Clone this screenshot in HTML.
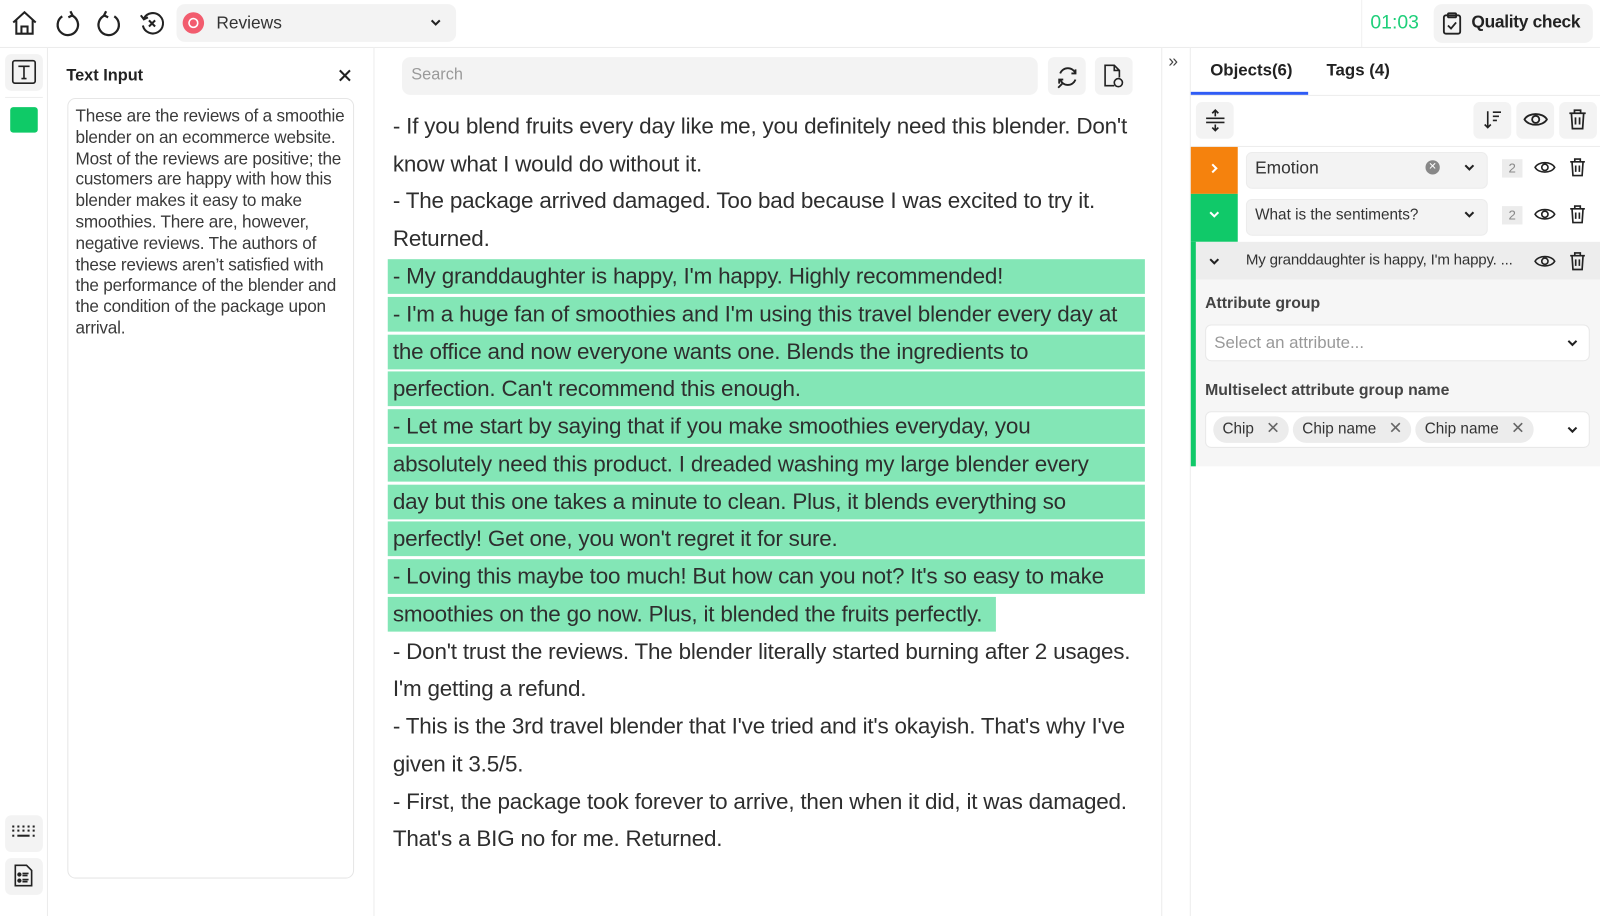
<!DOCTYPE html>
<html><head><meta charset="utf-8"><style>
*{box-sizing:border-box;margin:0;padding:0}
body{width:1600px;height:898px;overflow:hidden;background:#fff;font-family:"Liberation Sans",sans-serif;color:#2b2b2b;position:relative}
#root{position:absolute;left:0;top:0;width:1568px;height:880px;transform:scale(1.0204);transform-origin:0 0}
.abs{position:absolute}
.ib{position:absolute;background:#f3f3f3;border-radius:6px}
.ln{position:absolute;left:380px;height:34px;line-height:34px;padding-left:5px;font-size:22px;white-space:nowrap;color:#2e2e2e;letter-spacing:-0.2px}
.hl{background:#83e6b6;width:742px}
.lt{font-size:16.8px;line-height:20.8px;color:#3a3a3a;letter-spacing:-0.2px}
.sel{position:absolute;background:#f3f3f3;border:1px solid #ececec;border-radius:6px}
.chip{display:inline-block;background:#ececec;border-radius:14px;padding:0 9px;height:26px;line-height:26px;font-size:15px;color:#333;margin-right:4px}
.chip span{margin-left:12px;color:#666;font-size:16px}
</style></head><body><div id="root">
<div class="abs" style="left:0;top:46px;width:1568px;height:1px;background:#ececec"></div>
<svg class="abs" style="left:10px;top:9px" width="28" height="28" viewBox="0 0 28 28" fill="none" stroke="#222" stroke-width="2"><path d="M3 13L14 3l11 10M6 11v13h16V11M11 24v-7h6v7"/></svg>
<svg class="abs" style="left:52px;top:9px" width="28" height="28" viewBox="0 0 28 28" fill="none" stroke="#222" stroke-width="2.2"><path d="M9 7a10 10 0 1 0 9 -1"/><path d="M17 2l2 4-4 2"/></svg>
<svg class="abs" style="left:93px;top:9px" width="28" height="28" viewBox="0 0 28 28" fill="none" stroke="#222" stroke-width="2.2"><path d="M19 7a10 10 0 1 1 -9 -1"/><path d="M11 2l-2 4 4 2"/></svg>
<svg class="abs" style="left:135px;top:9px" width="28" height="28" viewBox="0 0 28 28" fill="none" stroke="#222" stroke-width="2"><path d="M6 9a10 10 0 1 1 -1 7"/><path d="M3 6l3 4 4-2"/><path d="M11 11l6 6M17 11l-6 6"/></svg>
<div class="ib" style="left:173px;top:4px;width:274px;height:37px;border-radius:8px"></div>
<div class="abs" style="left:179px;top:12px;width:21px;height:21px;border-radius:50%;background:#f25c6e"></div>
<svg class="abs" style="left:183px;top:16px" width="13" height="13" viewBox="0 0 13 13" fill="none" stroke="#fff" stroke-width="1.6"><path d="M3 9a4 4 0 0 1 7-5M10 4a4 4 0 0 1-7 5"/></svg>
<div class="abs" style="left:212px;top:13px;font-size:17px;color:#333">Reviews</div>
<svg class="abs" style="left:421px;top:17px" width="12" height="10" viewBox="0 0 12 10" fill="none" stroke="#222" stroke-width="2"><path d="M2 3l4 4 4-4"/></svg>
<div class="abs" style="left:1334px;top:0;width:1px;height:46px;background:#f0f0f0"></div>
<div class="abs" style="left:1343px;top:12px;font-size:19px;color:#1fcf7a">01:03</div>
<div class="ib" style="left:1405px;top:4px;width:156px;height:38px;border-radius:8px"></div>
<svg class="abs" style="left:1412px;top:11px" width="22" height="24" viewBox="0 0 22 24" fill="none" stroke="#222" stroke-width="1.8"><rect x="3" y="4" width="16" height="18" rx="2"/><rect x="7" y="2" width="8" height="4" rx="1"/><path d="M7 14l3 3 5-6"/></svg>
<div class="abs" style="left:1442px;top:12px;font-size:17px;font-weight:bold;color:#222;letter-spacing:-0.3px">Quality check</div>
<div class="abs" style="left:46px;top:47px;width:1px;height:851px;background:#ececec"></div>
<div class="ib" style="left:5px;top:53px;width:37px;height:36px"></div>
<svg class="abs" style="left:11px;top:58px" width="25" height="25" viewBox="0 0 25 25" fill="none" stroke="#222" stroke-width="1.6"><rect x="1.5" y="1.5" width="22" height="22" rx="2"/><path d="M7 7h11M12.5 7v12M10 19h5"/></svg>
<div class="abs" style="left:5px;top:95px;width:37px;height:1px;background:#eee"></div>
<div class="abs" style="left:10px;top:105px;width:27px;height:25px;background:#0fca67;border-radius:3px"></div>
<div class="ib" style="left:5px;top:799px;width:37px;height:36px"></div>
<svg class="abs" style="left:11px;top:808px" width="24" height="14" viewBox="0 0 24 14" fill="#222"><g><rect x="1" y="1" width="2" height="2"/><rect x="6" y="1" width="2" height="2"/><rect x="11" y="1" width="2" height="2"/><rect x="16" y="1" width="2" height="2"/><rect x="21" y="1" width="2" height="2"/><rect x="1" y="5" width="2" height="2"/><rect x="6" y="5" width="2" height="2"/><rect x="11" y="5" width="2" height="2"/><rect x="16" y="5" width="2" height="2"/><rect x="21" y="5" width="2" height="2"/><rect x="1" y="10" width="2" height="2"/><rect x="6" y="10" width="12" height="2"/><rect x="21" y="10" width="2" height="2"/></g></svg>
<div class="ib" style="left:5px;top:841px;width:37px;height:36px"></div>
<svg class="abs" style="left:13px;top:846px" width="20" height="24" viewBox="0 0 20 24" fill="none" stroke="#222" stroke-width="1.6"><path d="M2 2h11l5 5v15H2z"/><circle cx="6" cy="11" r="1.3" fill="#222"/><circle cx="6" cy="17" r="1.3" fill="#222"/><path d="M9 10h6M9 12h5M9 16h6M9 18h5"/></svg>
<div class="abs" style="left:65px;top:66px;font-size:16px;font-weight:bold;color:#222">Text Input</div>
<svg class="abs" style="left:331px;top:67px" width="14" height="14" viewBox="0 0 14 14" stroke="#222" stroke-width="2"><path d="M2 2l10 10M12 2L2 12"/></svg>
<div class="abs" style="left:66px;top:96px;width:281px;height:765px;border:1px solid #e6e6e6;border-radius:8px"></div>
<div class="abs lt" style="left:74px;top:104px;width:280px">These are the reviews of a smoothie<br>blender on an ecommerce website.<br>Most of the reviews are positive; the<br>customers are happy with how this<br>blender makes it easy to make<br>smoothies. There are, however,<br>negative reviews. The authors of<br>these reviews aren’t satisfied with<br>the performance of the blender and<br>the condition of the package upon<br>arrival.</div>
<div class="abs" style="left:366px;top:47px;width:1px;height:851px;background:#ececec"></div>
<div class="ib" style="left:394px;top:56px;width:623px;height:37px;border-radius:8px"></div>
<div class="abs" style="left:403px;top:65px;font-size:16px;color:#9a9a9a">Search</div>
<div class="ib" style="left:1027px;top:56px;width:37px;height:37px"></div>
<svg class="abs" style="left:1033px;top:62px" width="26" height="26" viewBox="0 0 26 26" fill="none" stroke="#222" stroke-width="1.8"><path d="M6 10a8 8 0 0 1 15 0M21 16a8 8 0 0 1-15 0"/><path d="M21 6v4h-4M5 20v-4h4"/><path d="M4 24l4-4"/></svg>
<div class="ib" style="left:1073px;top:56px;width:37px;height:37px"></div>
<svg class="abs" style="left:1080px;top:62px" width="24" height="26" viewBox="0 0 24 26" fill="none" stroke="#222" stroke-width="1.6"><path d="M12 22H3V2h9l5 5v7M12 2v5h5"/><circle cx="16" cy="19" r="4"/></svg>
<div class="ln" style="top:107px">- If you blend fruits every day like me, you definitely need this blender. Don't</div>
<div class="ln" style="top:144px">know what I would do without it.</div>
<div class="ln" style="top:180px">- The package arrived damaged. Too bad because I was excited to try it.</div>
<div class="ln" style="top:217px">Returned.</div>
<div class="ln hl" style="top:254px">- My granddaughter is happy, I'm happy. Highly recommended!</div>
<div class="ln hl" style="top:291px">- I'm a huge fan of smoothies and I'm using this travel blender every day at</div>
<div class="ln hl" style="top:328px">the office and now everyone wants one. Blends the ingredients to</div>
<div class="ln hl" style="top:364px">perfection. Can't recommend this enough.</div>
<div class="ln hl" style="top:401px">- Let me start by saying that if you make smoothies everyday, you</div>
<div class="ln hl" style="top:438px">absolutely need this product. I dreaded washing my large blender every</div>
<div class="ln hl" style="top:475px">day but this one takes a minute to clean. Plus, it blends everything so</div>
<div class="ln hl" style="top:511px">perfectly! Get one, you won't regret it for sure.</div>
<div class="ln hl" style="top:548px">- Loving this maybe too much! But how can you not? It's so easy to make</div>
<div class="ln hl" style="top:585px;width:596px">smoothies on the go now. Plus, it blended the fruits perfectly.</div>
<div class="ln" style="top:622px">- Don't trust the reviews. The blender literally started burning after 2 usages.</div>
<div class="ln" style="top:658px">I'm getting a refund.</div>
<div class="ln" style="top:695px">- This is the 3rd travel blender that I've tried and it's okayish. That's why I've</div>
<div class="ln" style="top:732px">given it 3.5/5.</div>
<div class="ln" style="top:769px">- First, the package took forever to arrive, then when it did, it was damaged.</div>
<div class="ln" style="top:805px">That's a BIG no for me. Returned.</div>
<div class="abs" style="left:1138px;top:47px;width:1px;height:851px;background:#ececec"></div>
<div class="abs" style="left:1145px;top:50px;font-size:17px;color:#444">»</div>
<div class="abs" style="left:1166px;top:47px;width:1px;height:851px;background:#ececec"></div>
<div class="abs" style="left:1186px;top:60px;font-size:16.5px;font-weight:bold;color:#222">Objects(6)</div>
<div class="abs" style="left:1300px;top:60px;font-size:16.5px;font-weight:bold;color:#222">Tags (4)</div>
<div class="abs" style="left:1167px;top:90px;width:115px;height:3px;background:#2f5cf5"></div>
<div class="abs" style="left:1167px;top:93px;width:433px;height:1px;background:#ececec"></div>
<div class="ib" style="left:1172px;top:100px;width:37px;height:36px"></div>
<svg class="abs" style="left:1180px;top:106px" width="22" height="24" viewBox="0 0 22 24" fill="none" stroke="#222" stroke-width="1.6"><path d="M2 10h18M2 14h18M11 2v6M8 5l3-3 3 3M11 22v-6M8 19l3 3 3-3"/></svg>
<div class="ib" style="left:1444px;top:100px;width:37px;height:36px"></div>
<svg class="abs" style="left:1452px;top:106px" width="22" height="22" viewBox="0 0 22 22" fill="none" stroke="#222" stroke-width="1.6"><path d="M6 3v16M3 16l3 3 3-3M11 4h8M11 8h6M11 12h4"/></svg>
<div class="ib" style="left:1486px;top:100px;width:37px;height:36px"></div>
<svg class="abs" style="left:1493px;top:109px" width="24" height="16" viewBox="0 0 24 16" fill="none" stroke="#222" stroke-width="1.8"><path d="M1 8c4-7 18-7 22 0c-4 7-18 7-22 0z"/><circle cx="12" cy="8" r="3.5"/></svg>
<div class="ib" style="left:1528px;top:100px;width:37px;height:36px"></div>
<svg class="abs" style="left:1536px;top:106px" width="20" height="22" viewBox="0 0 20 22" fill="none" stroke="#222" stroke-width="1.7"><path d="M2 5h16M7 5V2h6v3M4 5l1 15h10l1-15M8 9v7M12 9v7"/></svg>
<div class="abs" style="left:1167px;top:143px;width:433px;height:1px;background:#ececec"></div>
<div class="abs" style="left:1167px;top:144px;width:46px;height:46px;background:#f5820d"></div>
<svg class="abs" style="left:1184px;top:159px" width="12" height="12" viewBox="0 0 12 12" fill="none" stroke="#fff" stroke-width="2"><path d="M4 2l4 4-4 4"/></svg>
<div class="sel" style="left:1221px;top:149px;width:237px;height:36px"></div>
<div class="abs" style="left:1230px;top:155px;font-size:17px;color:#333">Emotion</div>
<div class="abs" style="left:1397px;top:157px;width:14px;height:14px;border-radius:50%;background:#888;color:#fff;font-size:10px;line-height:14px;text-align:center">✕</div>
<svg class="abs" style="left:1434px;top:159px" width="12" height="10" viewBox="0 0 12 10" fill="none" stroke="#222" stroke-width="2"><path d="M2 3l4 4 4-4"/></svg>
<div class="abs" style="left:1472px;top:156px;width:20px;height:18px;background:#ececec;font-size:13px;color:#888;text-align:center;line-height:18px">2</div>
<svg class="abs" style="left:1503px;top:157px" width="22" height="14" viewBox="0 0 24 16" fill="none" stroke="#222" stroke-width="1.8"><path d="M1 8c4-7 18-7 22 0c-4 7-18 7-22 0z"/><circle cx="12" cy="8" r="3.5"/></svg>
<svg class="abs" style="left:1537px;top:154px" width="18" height="20" viewBox="0 0 20 22" fill="none" stroke="#222" stroke-width="1.8"><path d="M2 5h16M7 5V2h6v3M4 5l1 15h10l1-15M8 9v7M12 9v7"/></svg>
<div class="abs" style="left:1167px;top:190px;width:46px;height:47px;background:#10c969"></div>
<svg class="abs" style="left:1184px;top:204px" width="12" height="12" viewBox="0 0 12 12" fill="none" stroke="#fff" stroke-width="2"><path d="M2 4l4 4 4-4"/></svg>
<div class="sel" style="left:1221px;top:195px;width:237px;height:36px"></div>
<div class="abs" style="left:1230px;top:202px;font-size:15px;color:#333">What is the sentiments?</div>
<svg class="abs" style="left:1434px;top:205px" width="12" height="10" viewBox="0 0 12 10" fill="none" stroke="#222" stroke-width="2"><path d="M2 3l4 4 4-4"/></svg>
<div class="abs" style="left:1472px;top:202px;width:20px;height:18px;background:#ececec;font-size:13px;color:#888;text-align:center;line-height:18px">2</div>
<svg class="abs" style="left:1503px;top:203px" width="22" height="14" viewBox="0 0 24 16" fill="none" stroke="#222" stroke-width="1.8"><path d="M1 8c4-7 18-7 22 0c-4 7-18 7-22 0z"/><circle cx="12" cy="8" r="3.5"/></svg>
<svg class="abs" style="left:1537px;top:200px" width="18" height="20" viewBox="0 0 20 22" fill="none" stroke="#222" stroke-width="1.8"><path d="M2 5h16M7 5V2h6v3M4 5l1 15h10l1-15M8 9v7M12 9v7"/></svg>
<div class="abs" style="left:1167px;top:237px;width:5px;height:220px;background:#10c969"></div>
<div class="abs" style="left:1172px;top:237px;width:428px;height:37px;background:#ededed"></div>
<svg class="abs" style="left:1184px;top:250px" width="12" height="12" viewBox="0 0 12 12" fill="none" stroke="#222" stroke-width="2"><path d="M2 4l4 4 4-4"/></svg>
<div class="abs" style="left:1221px;top:247px;font-size:14.8px;color:#333;letter-spacing:-0.2px">My granddaughter is happy, I'm happy. ...</div>
<svg class="abs" style="left:1503px;top:249px" width="22" height="14" viewBox="0 0 24 16" fill="none" stroke="#222" stroke-width="1.8"><path d="M1 8c4-7 18-7 22 0c-4 7-18 7-22 0z"/><circle cx="12" cy="8" r="3.5"/></svg>
<svg class="abs" style="left:1537px;top:246px" width="18" height="20" viewBox="0 0 20 22" fill="none" stroke="#222" stroke-width="1.8"><path d="M2 5h16M7 5V2h6v3M4 5l1 15h10l1-15M8 9v7M12 9v7"/></svg>
<div class="abs" style="left:1172px;top:274px;width:428px;height:183px;background:#f6f6f6"></div>
<div class="abs" style="left:1181px;top:289px;font-size:15.5px;font-weight:bold;color:#444">Attribute group</div>
<div class="abs" style="left:1181px;top:318px;width:377px;height:36px;background:#fff;border:1px solid #e8e8e8;border-radius:6px"></div>
<div class="abs" style="left:1190px;top:327px;font-size:16.5px;color:#999">Select an attribute...</div>
<svg class="abs" style="left:1535px;top:331px" width="12" height="10" viewBox="0 0 12 10" fill="none" stroke="#222" stroke-width="2"><path d="M2 3l4 4 4-4"/></svg>
<div class="abs" style="left:1181px;top:374px;font-size:15.5px;font-weight:bold;color:#444">Multiselect attribute group name</div>
<div class="abs" style="left:1181px;top:403px;width:377px;height:36px;background:#fff;border:1px solid #e8e8e8;border-radius:6px;padding:4px 0 0 7px;white-space:nowrap"><div class="chip">Chip<span>✕</span></div><div class="chip">Chip name<span>✕</span></div><div class="chip">Chip name<span>✕</span></div></div>
<svg class="abs" style="left:1535px;top:416px" width="12" height="10" viewBox="0 0 12 10" fill="none" stroke="#222" stroke-width="2"><path d="M2 3l4 4 4-4"/></svg>
</div></body></html>
